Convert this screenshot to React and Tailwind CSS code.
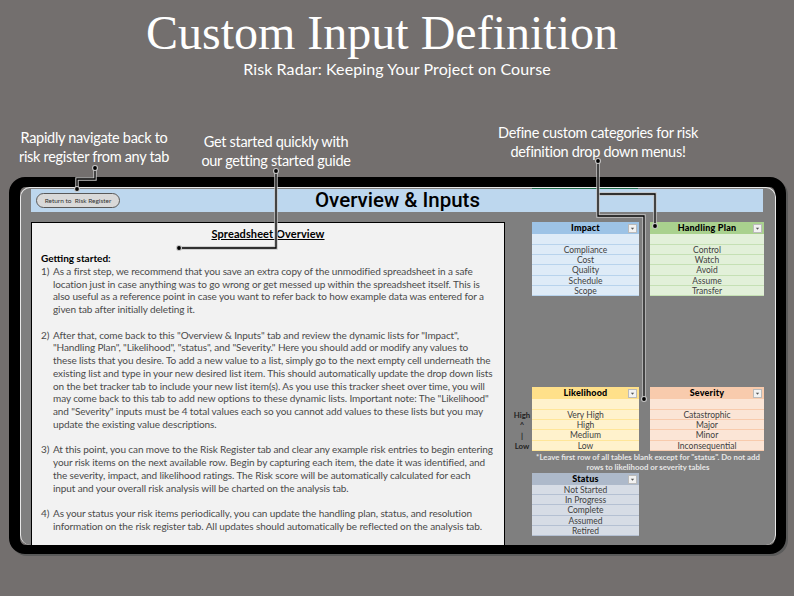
const Arrow = () => (
  <span className="flex h-[9px] w-[9px] items-center justify-center bg-[#f2f2f2] border border-[#bbbbbb]">
    <svg viewBox="0 0 6 6" className="h-[5px] w-[5px]"><path d="M1 2h4L3 4.5z" fill="#555" /></svg>
  </span>
);

function Table({ title, rows, head, body, line, blank = true, wide }) {
  const w = wide ? "w-[114px]" : "w-[107px]";
  return (
    <div className={`${w} text-[8.5px] leading-[10.3px] text-[#404040] text-center`} style={{ fontFamily: "Lato, sans-serif" }}>
      <div className="relative flex h-[12px] items-center justify-center font-black text-[9px] text-black tracking-[0.2px]" style={{ background: head }}>
        {title}
        <span className="absolute right-[2px] top-[2px]"><Arrow /></span>
      </div>
      {blank && <div className="h-[11px] border-b" style={{ background: body, borderColor: line }} />}
      {rows.map((r) => (
        <div key={r} className="h-[10.2px] border-b" style={{ background: body, borderColor: line }}>{r}</div>
      ))}
    </div>
  );
}

const para = [
  ["1)", ["As a first step, we recommend that you save an extra copy of the unmodified spreadsheet in a safe", "location just in case anything was to go wrong or get messed up within the spreadsheet itself. This is", "also useful as a reference point in case you want to refer back to how example data was entered for a", "given tab after initially deleting it."]],
  ["2)", ["After that, come back to this \"Overview & Inputs\" tab and review the dynamic lists for \"Impact\",", "\"Handling Plan\", \"Likelihood\", \"status\", and \"Severity.\" Here you should add or modify any values to", "these lists that you desire. To add a new value to a list, simply go to the next empty cell underneath the", "existing list and type in your new desired list item. This should automatically update the drop down lists", "on the bet tracker tab to include your new list item(s). As you use this tracker sheet over time, you will", "may come back to this tab to add new options to these dynamic lists. Important note: The \"Likelihood\"", "and \"Severity\" inputs must be 4 total values each so you cannot add values to these lists but you may", "update the existing value descriptions."]],
  ["3)", ["At this point, you can move to the Risk Register tab and clear any example risk entries to begin entering", "your risk items on the next available row. Begin by capturing each item, the date it was identified, and", "the severity, impact, and likelihood ratings. The Risk score will be automatically calculated for each", "input and your overall risk analysis will be charted on the analysis tab."]],
  ["4)", ["As your status your risk items periodically, you can update the handling plan, status, and resolution", "information on the risk register tab. All updates should automatically be reflected on the analysis tab."]],
];

const Wire = ({ d }) => (
  <>
    <path d={d} fill="none" stroke="#c4c4c4" strokeWidth="3.4" />
    <path d={d} fill="none" stroke="#000" strokeWidth="1.3" />
  </>
);

export default function App() {
  return (
    <div className="relative h-[596px] w-[794px] overflow-hidden bg-[#736f6e] text-white" style={{ fontFamily: "Lato, sans-serif" }}>
      <div className="flex h-[122px] flex-col items-center pt-[7px]">
        <h1 className="ml-[-30px] text-[48px] leading-[52px] whitespace-nowrap" style={{ fontFamily: "'Liberation Serif', serif" }}>Custom Input Definition</h1>
        <p className="text-[16px] leading-[20px] tracking-[0.1px]">Risk Radar: Keeping Your Project on Course</p>
      </div>
      <div className="flex h-[55px] items-start text-center text-[14.5px] leading-[19px] tracking-[-0.3px]">
        <div className="ml-[9px] mt-[6px] w-[170px]">Rapidly navigate back to<br />risk register from any tab</div>
        <div className="ml-[12px] mt-[10px] w-[170px]">Get started quickly with<br />our getting started guide</div>
        <div className="ml-[117px] mt-[1px] w-[240px]">Define custom categories for risk<br />definition drop down menus!</div>
      </div>

      <div className="ml-[9px] h-[377px] w-[777px] rounded-[16px] border-x-[11px] border-t-[10px] border-b-[9px] border-black shadow-[2px_2px_0_#5a5a5a]">
        <div className="flex h-full w-[756px] flex-col rounded-[10px] border-x border-t border-x-[#e8e8e8] border-t-[#e8e8e8] bg-[#7f7f7f] pl-[10px]">
          <div className="h-[1px] w-[732px]"><div className="ml-[501px] h-[1px] w-[106px] bg-[#1f6b4a]" /></div>
          <div className="relative flex h-[23px] w-[732px] items-center justify-center bg-[#bdd7ee]">
            <span className="absolute left-[5px] top-[4px] flex h-[15px] w-[84px] items-center justify-center rounded-full border border-[#595959] bg-[#d9d9d9] text-[6.5px] text-[#333]">Return to&nbsp; Risk Register</span>
            <span className="ml-[1px] text-[20.5px] font-medium text-black" style={{ fontFamily: "Roboto, sans-serif" }}>Overview &amp; Inputs</span>
          </div>
          <div className="mt-[10px] flex flex-1 gap-[27px]">
            <div className="w-[474px] border-x border-t border-black bg-[#f2f2f2] px-[9px] pt-[4px] text-[10px] leading-[12.75px] text-[#4a4a4a]">
              <div className="text-center text-[11px] font-bold leading-[14px] tracking-[0.1px] text-black underline">Spreadsheet Overview</div>
              <div className="mt-[11px] font-bold text-black">Getting started:</div>
              <div className="flex flex-col gap-[12.75px] whitespace-nowrap tracking-[-0.1px]">
                {para.map(([n, lines]) => (
                  <div key={n} className="flex">
                    <span className="w-[12px] shrink-0">{n}</span>
                    <div>{lines.map((l) => <div key={l}>{l}</div>)}</div>
                  </div>
                ))}
              </div>
            </div>
            <div className="w-[232px]">
              <div className="flex gap-[11px]">
                <Table title="Impact" rows={["Compliance", "Cost", "Quality", "Schedule", "Scope"]} head="#9dc3e6" body="#deebf7" line="#b8d3ec" />
                <Table wide title="Handling Plan" rows={["Control", "Watch", "Avoid", "Assume", "Transfer"]} head="#a9d18e" body="#e2f0d9" line="#c5e0b4" />
              </div>
              <div className="relative mt-[91px] flex gap-[11px]">
                <div className="absolute left-[-18px] top-[23px] flex w-[16px] flex-col items-center text-[7.8px] font-bold leading-[10.3px] text-[#1f1f1f]">
                  <span>High</span><span>^</span><span>|</span><span>Low</span>
                </div>
                <Table title="Likelihood" rows={["Very High", "High", "Medium", "Low"]} head="#ffe08a" body="#fff2cc" line="#ffe699" />
                <Table wide title="Severity" rows={["Catastrophic", "Major", "Minor", "Inconsequential"]} head="#f8cbad" body="#fbe5d6" line="#f8cbad" />
              </div>
              <p className="mt-[1px] ml-[-8px] w-[248px] whitespace-nowrap text-center text-[7.8px] font-bold leading-[10.7px] text-[#e6e6e6]">*Leave first row of all tables blank except for "status". Do not add<br />rows to likelihood or severity tables</p>
              <div>
                <Table blank={false} title="Status" rows={["Not Started", "In Progress", "Complete", "Assumed", "Retired"]} head="#adb9ca" body="#d6dce5" line="#b4c0d2" />
              </div>
            </div>
          </div>
        </div>
      </div>

      <svg className="pointer-events-none absolute left-0 top-0" width="794" height="596" viewBox="0 0 794 596">
        <Wire d="M95 168V179H77V189" />
        <Wire d="M276 171V248H179" />
        <Wire d="M598 194H655V226" />
        <Wire d="M598 161V216H644V399" />
        {[[95, 168], [77, 189], [276, 171], [179, 248], [598, 161], [655, 226], [644, 399]].map(([x, y]) => (
          <g key={x}>
            <circle cx={x} cy={y} r="3" fill="#c4c4c4" />
            <circle cx={x} cy={y} r="1.9" fill="#000" />
          </g>
        ))}
      </svg>
    </div>
  );
}
